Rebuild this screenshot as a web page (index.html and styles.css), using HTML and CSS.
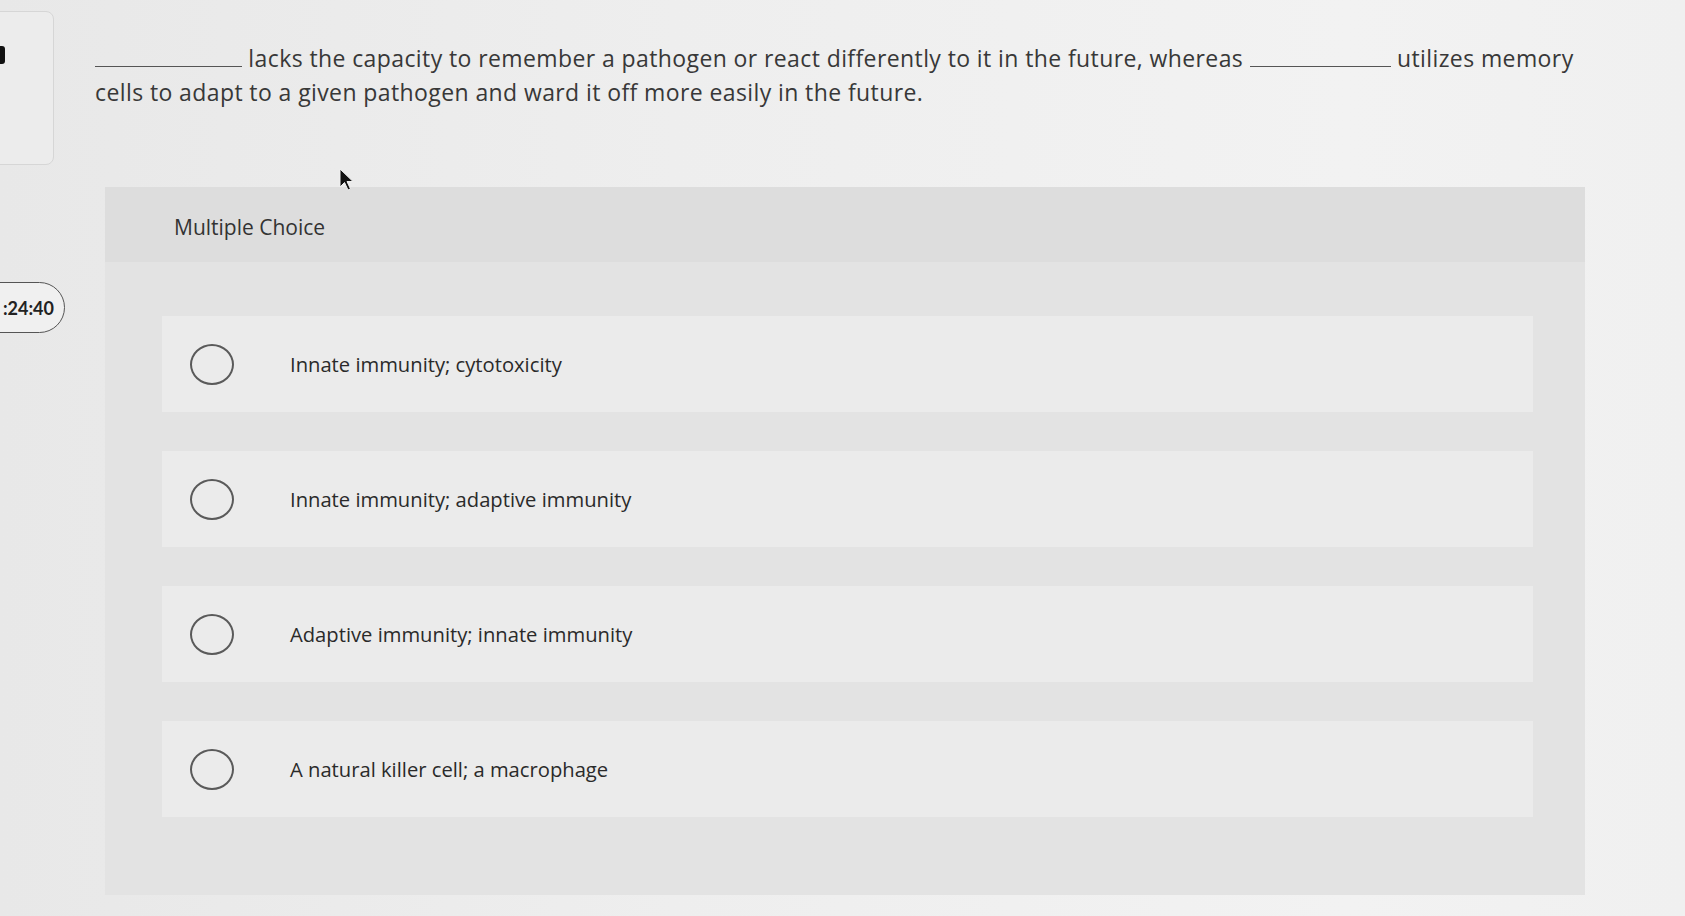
FILE: index.html
```html
<!DOCTYPE html>
<html>
<head>
<meta charset="utf-8">
<link rel="stylesheet" href="styles.css">
</head>
<body>
<div class="page">
  <aside class="sidebar">
    <div class="side-card"></div>
    <div class="timer">:24:40</div>
  </aside>
  <main class="content">
    <p class="question"><span class="blank blank-a"></span> lacks the capacity to remember a pathogen or react differently to it in the future, whereas <span class="blank blank-b"></span> utilizes memory<br>cells to adapt to a given pathogen and ward it off more easily in the future.</p>
    <section class="panel">
      <div class="panel-head">Multiple Choice</div>
      <div class="options">
        <label class="option"><span class="radio"></span><span class="opt-text">Innate immunity; cytotoxicity</span></label>
        <label class="option"><span class="radio"></span><span class="opt-text">Innate immunity; adaptive immunity</span></label>
        <label class="option"><span class="radio"></span><span class="opt-text">Adaptive immunity; innate immunity</span></label>
        <label class="option"><span class="radio"></span><span class="opt-text">A natural killer cell; a macrophage</span></label>
      </div>
    </section>
  </main>
  <svg class="cursor" width="16" height="24" viewBox="0 0 16 24"><path d="M1 1 L1 19 L5.5 14.5 L9 22 L11.5 21 L8 13.5 L14 13.5 Z" fill="#111" stroke="#eee" stroke-width="1"/></svg>
  <span class="edge-mark"></span>
</div>
</body>
</html>
```
FILE: styles.css
```css
html, body {
  margin: 0;
  padding: 0;
}
body {
  width: 1685px;
  height: 916px;
  overflow: hidden;
  background: linear-gradient(90deg, #e8e8e8 0%, #eeeeee 40%, #f2f2f2 80%, #f0f0f0 100%);
  font-family: "Open Sans", "Lato", sans-serif;
  color: #333;
}
.page {
  position: relative;
  display: flex;
  height: 916px;
}
.sidebar {
  width: 64px;
  flex: none;
  display: flex;
  flex-direction: column;
}
.side-card {
  margin-top: 11px;
  margin-left: -20px;
  width: 72px;
  height: 152px;
  border: 1px solid #d6d6d6;
  border-radius: 8px;
  background: #ececec;
}
.timer {
  margin-top: 117px;
  margin-left: -34px;
  width: 99px;
  height: 51px;
  box-sizing: border-box;
  border: 1.5px solid #555;
  border-radius: 26px;
  background: #f0f0f0;
  display: flex;
  align-items: center;
  justify-content: flex-end;
  padding-right: 10px;
  font-family: "Lato", sans-serif;
  font-weight: 700;
  font-size: 18px;
  color: #222;
}
.content {
  flex: 1;
  padding-left: 31px;
}
.question {
  margin: 41px 0 0 0;
  font-size: 23px;
  letter-spacing: 0.4px;
  line-height: 34px;
  color: #383838;
  white-space: nowrap;
}
.blank {
  display: inline-block;
  width: 147px;
  border-bottom: 1.5px solid #555;
}
.blank-b { width: 141px; }
.panel {
  margin-top: 78px;
  margin-left: 10px;
  width: 1480px;
  height: 708px;
  background: #e3e3e3;
}
.panel-head {
  height: 75px;
  box-sizing: border-box;
  padding: 26px 0 0 69px;
  background: #dddddd;
  font-size: 21px;
  color: #333;
}
.options {
  display: flex;
  flex-direction: column;
  gap: 39px;
  padding: 54px 52px 0 57px;
}
.option {
  height: 96px;
  background: #ebebeb;
  display: flex;
  align-items: center;
  padding-left: 28px;
}
.radio {
  width: 44px;
  height: 41px;
  box-sizing: border-box;
  border: 2px solid #5a5a5a;
  border-radius: 50%;
  flex: none;
}
.opt-text {
  margin-left: 56px;
  font-size: 20.2px;
  color: #2a2a2a;
}
.cursor {
  position: absolute;
  left: 339px;
  top: 168px;
}
.edge-mark {
  position: absolute;
  left: 0;
  top: 46px;
  width: 5px;
  height: 18px;
  background: #111;
  border-radius: 0 3px 3px 0;
}
```
